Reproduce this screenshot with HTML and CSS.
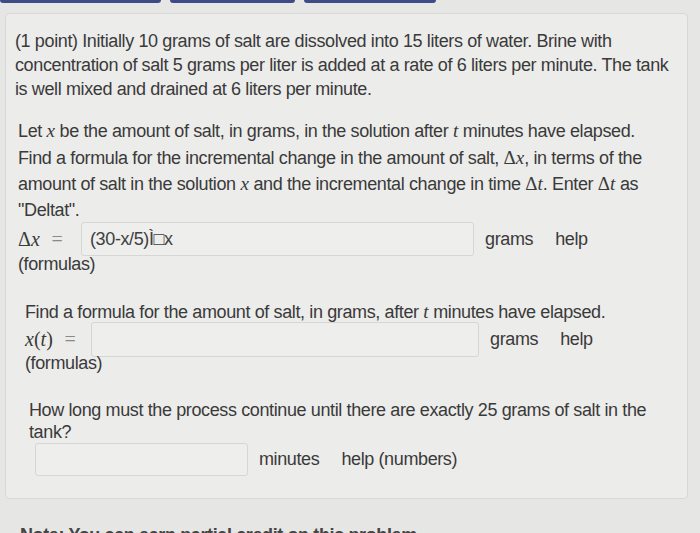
FILE: index.html
```html
<!DOCTYPE html>
<html>
<head>
<meta charset="utf-8">
<link rel="stylesheet" href="styles.css">
</head>
<body>
<div class="tabs">
  <span class="tab t1"></span>
  <span class="tab t2"></span>
  <span class="tab t3"></span>
</div>
<div class="problem">
  <p class="intro">(1 point) Initially 10 grams of salt are dissolved into 15 liters of water. Brine with concentration of salt 5 grams per liter is added at a rate of 6 liters per minute. The tank is well mixed and drained at 6 liters per minute.</p>

  <section class="part part1">
    <p class="text t-part1">Let <i class="m">x</i> be the amount of salt, in grams, in the solution after <i class="m">t</i> minutes have elapsed. Find a formula for the incremental change in the amount of salt, <span class="mu">Δ</span><i class="m">x</i>, in terms of the amount of salt in the solution <i class="m">x</i> and the incremental change in time <span class="mu">Δ</span><i class="m">t</i>. Enter <span class="mu">Δ</span><i class="m">t</i> as "Deltat".</p>
    <div class="answer">
      <span class="label"><span class="mu">Δ</span><i class="m">x</i> <span class="mu eq">=</span></span>
      <span class="input wide1">(30-x/5)Ì□x</span>
      <span class="unit">grams</span>
      <span class="help">help</span>
    </div>
    <p class="hint">(formulas)</p>
  </section>

  <section class="part part2">
    <p class="text">Find a formula for the amount of salt, in grams, after <i class="m">t</i> minutes have elapsed.</p>
    <div class="answer">
      <span class="label"><i class="m">x</i><span class="mu">(</span><i class="m">t</i><span class="mu">)</span> <span class="mu eq">=</span></span>
      <span class="input wide2"></span>
      <span class="unit">grams</span>
      <span class="help">help</span>
    </div>
    <p class="hint">(formulas)</p>
  </section>

  <section class="part part3">
    <p class="text narrow">How long must the process continue until there are exactly 25 grams of salt in the tank?</p>
    <div class="answer">
      <span class="input wide3"></span>
      <span class="unit">minutes</span>
      <span class="help">help (numbers)</span>
    </div>
  </section>
</div>
<p class="note">Note: You can earn partial credit on this problem.</p>
</body>
</html>
```
FILE: styles.css
```css
html, body {
  margin: 0;
  padding: 0;
}
body {
  width: 700px;
  height: 533px;
  overflow: hidden;
  background: #e6e6e4;
  font-family: "Liberation Sans", Arial, sans-serif;
  font-size: 18px;
  letter-spacing: -0.38px;
  color: #3a3a3a;
}
.tabs {
  display: flex;
  gap: 9px;
  height: 3px;
}
.tab {
  display: block;
  background: #3f4b86;
  border-radius: 0 0 3px 3px;
}
.t1 { width: 161px; }
.t2 { width: 125px; }
.t3 { width: 132px; }
.problem {
  margin: 10px 12px 0 5px;
  height: 486px;
  box-sizing: border-box;
  border: 1px solid #d8d8d6;
  border-radius: 4px;
  background: #ececea;
  padding: 15px 0 0 9px;
}
p { margin: 0; }
.intro {
  line-height: 24px;
  width: 662px;
}
.part1 {
  margin-top: 17px;
  padding-left: 3px;
}
.text {
  line-height: 25.5px;
  width: 662px;
}
.t-part1 { width: 640px; }
.m {
  font-family: "Liberation Serif", "DejaVu Serif", serif;
  font-style: italic;
  font-size: 19px;
  letter-spacing: 0;
}
.mu {
  font-family: "Liberation Serif", "DejaVu Serif", serif;
  font-size: 19px;
  letter-spacing: 0;
}
.label .m, .label .mu { font-size: 20px; }
.eq { color: #8a8a8a; margin-left: 7px; }
.answer {
  display: flex;
  align-items: center;
  margin-top: -1px;
  height: 34px;
}
.label {
  width: 63px;
  flex: none;
  white-space: nowrap;
}
.input {
  display: flex;
  align-items: center;
  height: 34px;
  box-sizing: border-box;
  border: 1px solid #d6d6d4;
  border-radius: 3px;
  background: #eeeeec;
  padding-left: 8px;
  color: #404040;
  flex: none;
}
.wide1 { width: 393px; }
.wide2 { width: 388px; }
.wide3 { width: 213px; }
.unit { margin-left: 11px; }
.help { margin-left: 22px; }
.hint {
  margin-top: -4px;
  line-height: 24px;
}
.part2 {
  margin-top: 23px;
  padding-left: 10px;
}
.part2 .answer { margin-top: -4px; height: 35px; }
.part2 .input { height: 35px; }
.part2 .hint { margin-top: -6px; }
.part2 .answer .label { width: 66px; }
.part3 {
  margin-top: 24px;
  padding-left: 14px;
}
.narrow { width: 625px; line-height: 22px; }
.part3 .answer { margin-top: 0; padding-left: 6px; height: 33px; }
.part3 .input { height: 33px; }
.note {
  margin: 26px 0 0 20px;
  font-weight: bold;
  color: #444;
}
```
